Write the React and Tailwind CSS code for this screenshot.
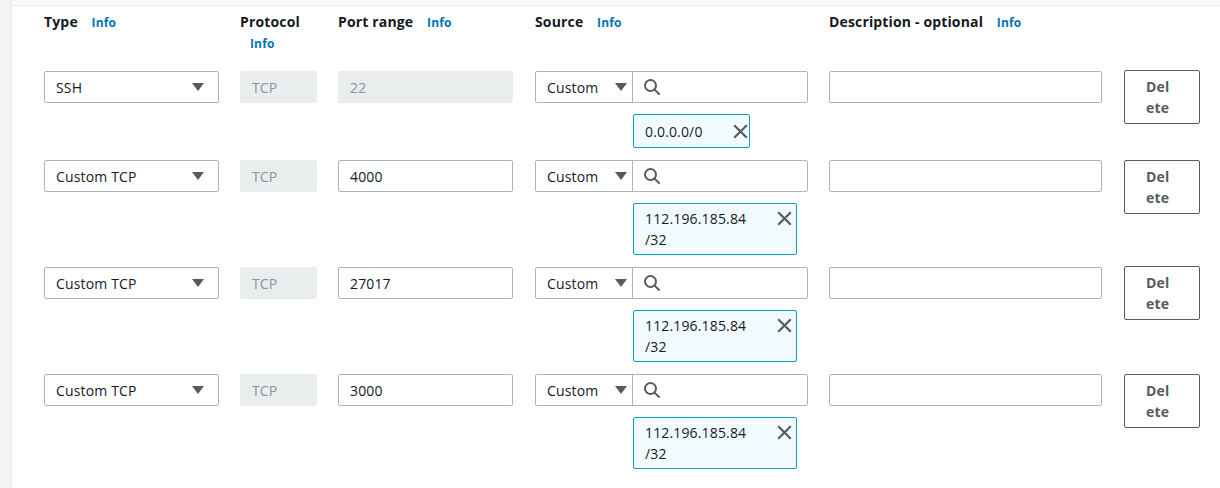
import React from "react";

const font = { fontFamily: '"Open Sans", "Noto Sans", sans-serif', letterSpacing: "0.15px" };

function Caret() {
  return (
    <svg width="12" height="8" viewBox="0 0 12 8" className="shrink-0">
      <path d="M0 0 L12 0 L6 8 Z" fill="#545b64" />
    </svg>
  );
}

function SearchIcon() {
  return (
    <svg width="18" height="18" viewBox="0 0 18 18" fill="none" stroke="#545b64" strokeWidth="2" strokeLinecap="round">
      <circle cx="7.5" cy="7.5" r="5.5" />
      <line x1="11.6" y1="11.6" x2="16" y2="16" />
    </svg>
  );
}

function XIcon() {
  return (
    <svg width="15" height="15" viewBox="0 0 15 15" stroke="#545b64" strokeWidth="2.2" strokeLinecap="square">
      <line x1="2" y1="2" x2="13" y2="13" />
      <line x1="13" y1="2" x2="2" y2="13" />
    </svg>
  );
}

function Header({ label }) {
  return (
    <div className="text-[14px] leading-[21px] font-bold text-[#16191f]">
      {label}{" "}
      <span className="inline-block ml-[10px] text-[12px] text-[#0073bb] font-bold">Info</span>
    </div>
  );
}

function Select({ value }) {
  return (
    <div className="h-[32px] border border-[#aab7b8] rounded-[2px] flex items-center justify-between pl-[11px] pr-[14px] text-[14px] text-[#16191f] bg-white">
      <span>{value}</span>
      <Caret />
    </div>
  );
}

function Disabled({ value }) {
  return (
    <div className="h-[32px] border border-[#eaeded] bg-[#eaeded] rounded-[2px] flex items-center pl-[11px] text-[14px] text-[#879596]">
      {value}
    </div>
  );
}

function TextInput({ value, w }) {
  return (
    <div className={"h-[32px] border border-[#aab7b8] rounded-[2px] flex items-center pl-[11px] text-[14px] text-[#16191f] bg-white " + (w || "")}>
      {value}
    </div>
  );
}

const rows = [
  { type: "SSH", port: "22", portDisabled: true, token: ["0.0.0.0/0"], short: true },
  { type: "Custom TCP", port: "4000", token: ["112.196.185.84", "/32"] },
  { type: "Custom TCP", port: "27017", token: ["112.196.185.84", "/32"] },
  { type: "Custom TCP", port: "3000", token: ["112.196.185.84", "/32"] },
];

const cols = "grid grid-cols-[175px_77px_175px_274px_274px_76px] gap-x-[21px]";

export default function App() {
  return (
    <div className="w-[1220px] h-[488px] bg-white flex overflow-hidden" style={font}>
      <div className="w-[12px] h-full bg-[#f2f3f3] border-r border-[#eaeded] shrink-0" />
      <div className="flex-1 flex flex-col">
        <div className="h-[6px] bg-[#fafafa] border-b border-[#eaeded] shrink-0" />
        <div className="pl-[32px] pt-[5px]">
          <div className={cols + " items-start"}>
            <Header label="Type" />
            <Header label="Protocol" />
            <Header label="Port range" />
            <div className="pl-[1px]">
              <Header label="Source" />
            </div>
            <Header label="Description - optional" />
            <div />
          </div>
          <div className="mt-[17px] flex flex-col gap-[12px]">
            {rows.map((r, i) => (
              <div key={i} className={cols + " items-start"}>
                <Select value={r.type} />
                <Disabled value="TCP" />
                {r.portDisabled ? <Disabled value={r.port} /> : <TextInput value={r.port} />}
                <div className="flex flex-col pl-[1px]">
                  <div className="flex h-[32px] border border-[#aab7b8] rounded-[2px] bg-white">
                    <div className="w-[97px] flex items-center justify-between pl-[11px] pr-[5px] text-[14px] text-[#16191f] border-r border-[#aab7b8]">
                      <span>Custom</span>
                      <Caret />
                    </div>
                    <div className="flex-1 flex items-center pl-[10px]">
                      <SearchIcon />
                    </div>
                  </div>
                  <div className="pl-[98px] mt-[11px]">
                    {r.short ? (
                      <div className="w-[117px] h-[34px] border border-[#00a1c9] bg-[#f1faff] rounded-[2px] flex items-center justify-between pl-[11px] pr-[1px] text-[14px] text-[#16191f]">
                        <span>{r.token[0]}</span>
                        <XIcon />
                      </div>
                    ) : (
                      <div className="w-[164px] border border-[#00a1c9] bg-[#f1faff] rounded-[2px] flex justify-between pl-[11px] pr-[4px] py-[4px] text-[14px] leading-[21px] text-[#16191f]">
                        <span>
                          {r.token[0]}
                          <br />
                          {r.token[1]}
                        </span>
                        <span className="mt-[3px]">
                          <XIcon />
                        </span>
                      </div>
                    )}
                  </div>
                </div>
                <TextInput value="" w="w-[273px]" />
                <button className={"w-[76px] h-[54px] border border-[#545b64] rounded-[2px] bg-white text-[14px] font-bold text-[#545b64] leading-[21px] flex flex-col items-start pl-[21px] justify-center " + (i === 0 || i === 2 ? "-mt-[1px]" : "")}>
                  <span>Del</span>
                  <span>ete</span>
                </button>
              </div>
            ))}
          </div>
        </div>
      </div>
    </div>
  );
}
